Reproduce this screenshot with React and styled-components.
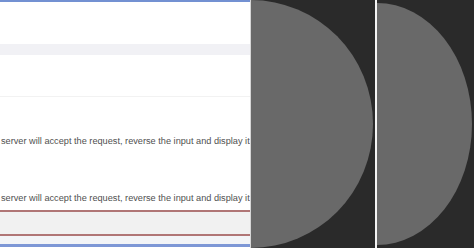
import React from "react";
import styled, { createGlobalStyle } from "styled-components";

const GlobalStyle = createGlobalStyle`
  html, body {
    margin: 0;
    padding: 0;
    background: #2a2a2a;
  }
  body {
    font-family: "Liberation Sans", Arial, sans-serif;
  }
`;

const Screen = styled.div`
  display: flex;
  width: 474px;
  height: 248px;
  overflow: hidden;
`;

const Page = styled.div`
  display: flex;
  flex-direction: column;
  width: 250px;
  flex: none;
  background: #ffffff;
  overflow: hidden;
`;

const Bar = styled.div`
  flex: none;
  height: ${(p) => p.$h}px;
  background: ${(p) => p.$bg};
`;

const Rule = styled.div`
  flex: none;
  height: 1px;
  background: ${(p) => p.$color};
`;

const Spacer = styled.div`
  flex: none;
  height: ${(p) => p.$h}px;
`;

const Message = styled.p`
  flex: none;
  margin: 0;
  height: 14px;
  line-height: 14px;
  font-size: 9.2px;
  color: #505050;
  white-space: nowrap;
  overflow: hidden;
  padding-left: 1px;
`;

const Field = styled.div`
  flex: none;
  height: ${(p) => p.$h}px;
  background: #f1f1f1;
  border-top: 2px solid #b07676;
  border-bottom: 2px solid #b07676;
`;

const Divider = styled.div`
  flex: none;
  width: ${(p) => p.$w}px;
  background: ${(p) => p.$color};
`;

const Pane = styled.div`
  flex: none;
  width: ${(p) => p.$w}px;
  height: 248px;
  background: #2a2a2a;
  svg {
    display: block;
  }
`;

const HalfDisc = ({ w, rx, ry }) => (
  <svg width={w} height="248" viewBox={`0 0 ${w} 248`}>
    <ellipse cx="0" cy="124" rx={rx} ry={ry} fill="#696969" />
  </svg>
);

const text = "server will accept the request, reverse the input and display it l";

export default function App() {
  return (
    <Screen>
      <GlobalStyle />
      <Page>
        <Bar $h={2} $bg="#7391d2" />
        <Spacer $h={42} />
        <Bar $h={11} $bg="#f1f1f5" />
        <Spacer $h={41} />
        <Rule $color="#f2f2f2" />
        <Spacer $h={37} />
        <Message>{text}</Message>
        <Spacer $h={43} />
        <Message>{text}</Message>
        <Spacer $h={5} />
        <Field $h={22} />
        <Bar $h={8} $bg="#f2f4f7" />
        <Bar $h={3} $bg="#7d97d6" />
      </Page>
      <Divider $w={1} $color="#d6d6d6" />
      <Pane $w={124}>
        <HalfDisc w={124} rx={122} ry={124} />
      </Pane>
      <Divider $w={2} $color="#f4f4f4" />
      <Pane $w={97}>
        <HalfDisc w={97} rx={95} ry={121} />
      </Pane>
    </Screen>
  );
}
